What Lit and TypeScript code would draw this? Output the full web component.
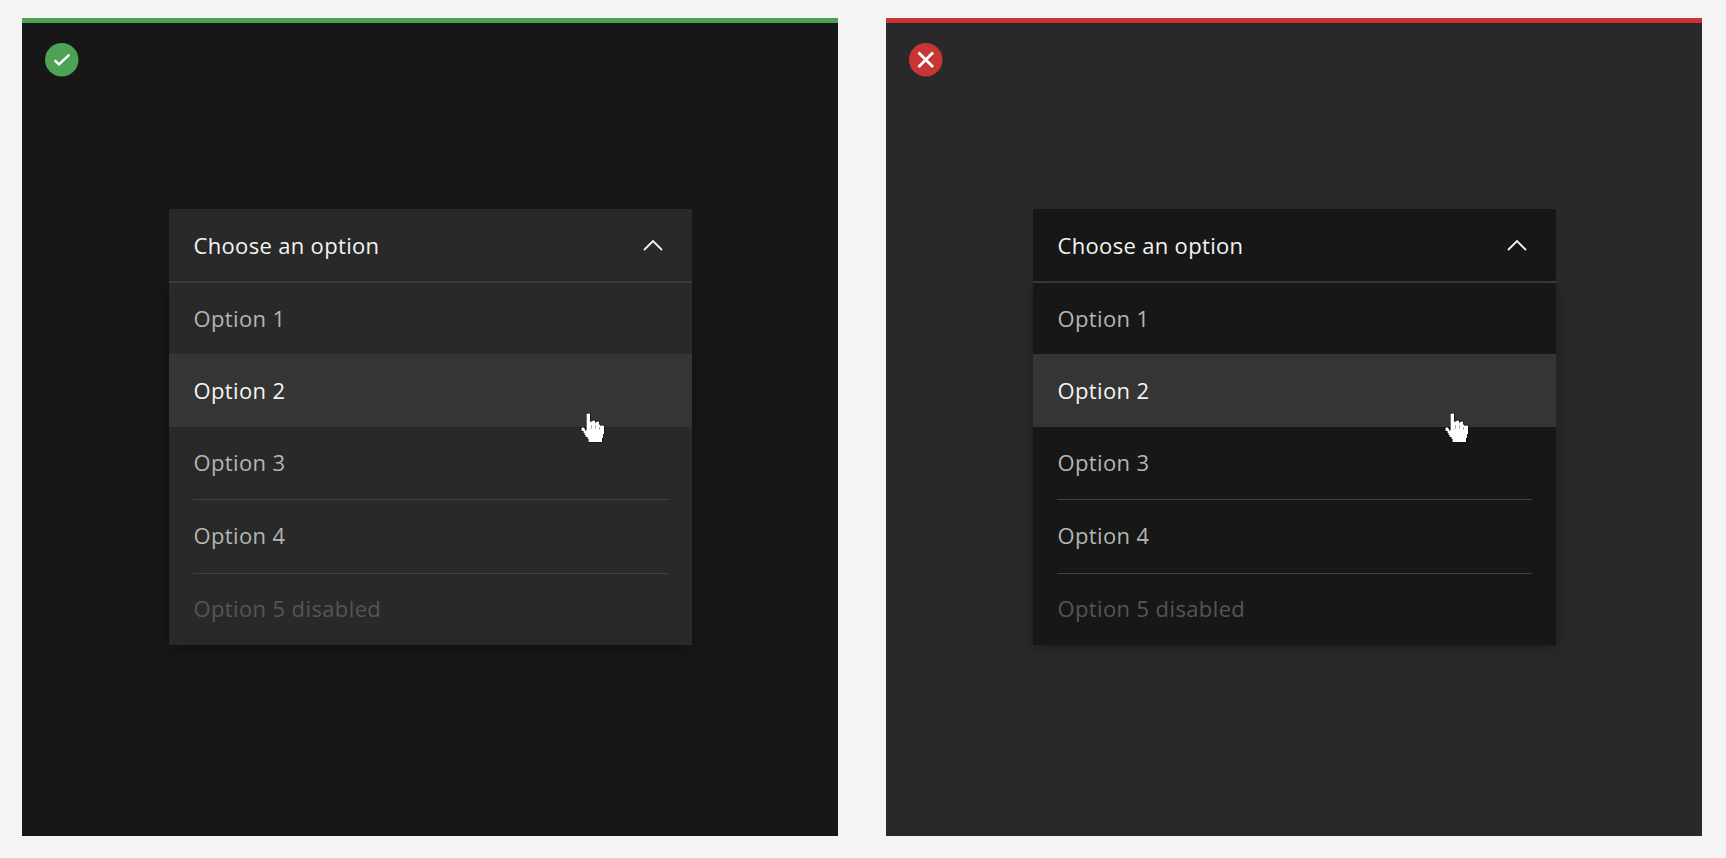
import { LitElement, html, css, svg } from "lit";
import { customElement } from "lit/decorators.js";

const hand = svg`<svg class="cursor" width="25" height="31" viewBox="0 0 25 31" shape-rendering="crispEdges"><path fill="#fff" stroke="#111" stroke-width="0.6" d="M6 1H10V9H12V8H15V10H16V9H19V12H20V13H24V22H23V26H22V30H8V27H7V25H5V23H4V21H3V19H1V15H4V16H5V18H6Z"/><path fill="none" stroke="#b0b0b0" stroke-width="1" d="M11.5 13v4M15.5 13v4M19.5 15v3"/></svg>`;

@customElement("app-root")
export class AppRoot extends LitElement {
  static styles = css`
    :host {
      display: block;
      width: 1726px;
      height: 858px;
      background: #f4f4f4;
      font-family: "Open Sans", "Noto Sans", sans-serif;
    }
    .page {
      display: flex;
      gap: 48px;
      padding: 18px 24px 22px 22px;
      height: 858px;
      box-sizing: border-box;
    }
    .panel {
      position: relative;
      width: 816px;
      height: 818px;
      box-sizing: border-box;
      border-top: 5px solid;
      display: flex;
      flex-direction: column;
      align-items: center;
      padding-top: 186px;
    }
    .do { background: #171717; border-color: #4ea256; --menu: #292929; }
    .dont { background: #292929; border-color: #c93434; --menu: #171717; }
    .badge { position: absolute; left: 23px; top: 20px; width: 33.5px; height: 33.5px; }
    .dropdown { width: 523px; }
    .head {
      height: 74px;
      box-sizing: border-box;
      padding: 0 29px 0 25px;
      display: flex;
      align-items: center;
      justify-content: space-between;
      color: #f4f4f4;
      font-size: 22px;
      letter-spacing: 0.33px;
      background: var(--menu);
      border-bottom: 2px solid #3d3d3d;
    }
    .menu {
      background: var(--menu);
      box-shadow: 0 3px 12px rgba(0, 0, 0, 0.3);
    }
    .row {
      height: 72px;
      box-sizing: border-box;
      position: relative;
      padding: 0 24px 2px 25px;
      display: flex;
      align-items: center;
      color: #b4b4b4;
      font-size: 22px;
      letter-spacing: 0.38px;
    }
    .row.first { height: 71px; }
    .row.hover { height: 73px; background: #353535; color: #f4f4f4; }
    .row.tall { height: 74px; }
    .row.sep::before {
      content: "";
      position: absolute;
      left: 24px;
      right: 24px;
      top: 0;
      height: 1px;
      background: #404040;
    }
    .row.disabled { color: #555555; }
    .cursor { position: absolute; left: 411px; top: 58px; }
  `;
  render() {
    const panel = (cls: string, badge: unknown) => html`
      <div class="panel ${cls}">
        ${badge}
        <div class="dropdown">
          <div class="head">
            <span>Choose an option</span>
            <svg width="20" height="12" viewBox="0 0 20 12"><path d="M1 11L10 2L19 11" fill="none" stroke="#f4f4f4" stroke-width="1.8"/></svg>
          </div>
          <div class="menu">
            <div class="row first">Option 1</div>
            <div class="row hover">Option 2${hand}</div>
            <div class="row">Option 3</div>
            <div class="row sep tall">Option 4</div>
            <div class="row sep disabled">Option 5 disabled</div>
          </div>
        </div>
      </div>`;
    return html`<div class="page">
      ${panel("do", html`<svg class="badge" viewBox="0 0 33 33"><circle cx="16.5" cy="16.5" r="16.5" fill="#4ea256"/><path d="M9.5 17L13.8 21L24 11.5" fill="none" stroke="#fff" stroke-width="2.4"/></svg>`)}
      ${panel("dont", html`<svg class="badge" viewBox="0 0 33 33"><circle cx="16.5" cy="16.5" r="16.5" fill="#c93434"/><path d="M9.3 9.3L23.7 23.7M23.7 9.3L9.3 23.7" fill="none" stroke="#fff" stroke-width="2.8"/></svg>`)}
    </div>`;
  }
}
